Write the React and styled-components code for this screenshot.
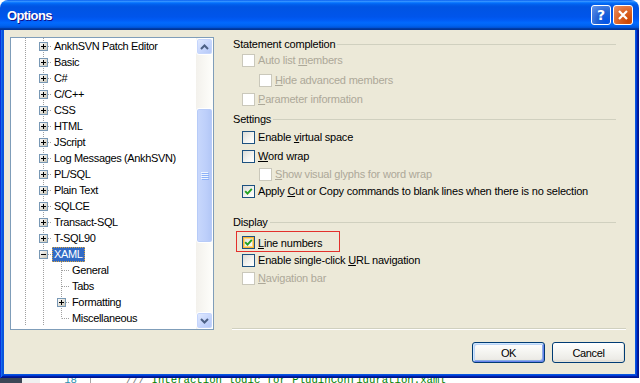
import React from 'react';
import styled, { createGlobalStyle } from 'styled-components';

const GlobalStyle = createGlobalStyle`
  html, body {
    margin: 0;
    padding: 0;
    background: #ffffff;
  }
  body {
    font-family: "Liberation Sans", Arial, sans-serif;
    font-size: 11px;
    letter-spacing: -0.35px;
  }
`;

const treeItems = [
  { label: 'AnkhSVN Patch Editor' },
  { label: 'Basic' },
  { label: 'C#' },
  { label: 'C/C++' },
  { label: 'CSS' },
  { label: 'HTML' },
  { label: 'JScript' },
  { label: 'Log Messages (AnkhSVN)' },
  { label: 'PL/SQL' },
  { label: 'Plain Text' },
  { label: 'SQLCE' },
  { label: 'Transact-SQL' },
  { label: 'T-SQL90' },
  { label: 'XAML', expanded: true, selected: true },
  { label: 'General', child: true },
  { label: 'Tabs', child: true },
  { label: 'Formatting', child: true, collapsed: true },
  { label: 'Miscellaneous', child: true, last: true },
];

const Screen = styled.div`
  width: 640px;
  height: 383px;
  overflow: hidden;
  display: flex;
  flex-direction: column;
`;

const Window = styled.div`
  width: 639px;
  height: 378px;
  display: flex;
  flex-direction: column;
  border-radius: 8px 8px 0 0;
  overflow: hidden;
  flex: none;
`;

const TitleBar = styled.div`
  height: 30px;
  flex: none;
  display: flex;
  align-items: center;
  gap: 2px;
  padding: 0 6px 0 7px;
  background: linear-gradient(
    180deg,
    #0058ee 0%,
    #3a93ff 4%,
    #288eff 6%,
    #127dff 8%,
    #036ffc 10%,
    #0262ee 14%,
    #0057e5 20%,
    #0054e3 24%,
    #0055eb 56%,
    #005bf5 66%,
    #026afe 76%,
    #0062ef 86%,
    #0052d6 92%,
    #0040ab 94%,
    #003092 100%
  );
`;

const Title = styled.div`
  flex: 1;
  color: #ffffff;
  font-size: 13px;
  font-weight: bold;
  letter-spacing: -0.6px;
  text-shadow: 1px 1px #0f1089;
`;

const CaptionButton = styled.div`
  width: 20px;
  height: 20px;
  box-sizing: border-box;
  border: 1px solid #ffffff;
  border-radius: 3px;
  display: flex;
  align-items: center;
  justify-content: center;
  color: #ffffff;
  font-family: "DejaVu Sans", sans-serif;
  font-weight: bold;
  font-size: 14px;
  letter-spacing: 0;
  background: ${({ $danger }) =>
    $danger
      ? 'radial-gradient(circle at 80% 85%, #cc4600 0%, #dc6527 50%, #e8916a 100%)'
      : 'radial-gradient(circle at 80% 85%, #0054e9 0%, #2263d5 45%, #6696eb 100%)'};
`;

const Frame = styled.div`
  flex: 1;
  display: flex;
  padding: 0 4px 4px;
  background: #0855dd;
  box-shadow: inset 1px 0 #0831d9, inset -1px -1px #00138c, inset 2px 0 #166aee,
    inset -2px -2px #001ea0, inset 3px 0 #0855dd, inset -3px -3px #003bda;
`;

const Body = styled.div`
  flex: 1;
  display: flex;
  flex-direction: column;
  background: #ece9d8;
  padding: 7px 9px 0 6px;
`;

const Main = styled.div`
  height: 293px;
  display: flex;
`;

const Tree = styled.div`
  width: 204px;
  box-sizing: border-box;
  border: 1px solid #7f9db9;
  background: #ffffff;
  display: flex;
  overflow: hidden;
`;

const TreeList = styled.div`
  flex: 1;
  display: flex;
  flex-direction: column;
  overflow: hidden;
`;

const TreeRow = styled.div`
  height: 16px;
  flex: none;
  display: flex;
  align-items: center;
  padding-left: 5px;
  color: #000000;
`;

const TreeLabel = styled.span`
  height: 15px;
  line-height: 15px;
  padding: 0 2px;
  white-space: nowrap;
  box-sizing: border-box;
  color: ${({ $selected }) => ($selected ? '#ffffff' : '#000000')};
  background: ${({ $selected }) => ($selected ? '#316ac5' : 'transparent')};
  outline: ${({ $selected }) => ($selected ? '1px dotted #d9a441' : 'none')};
  outline-offset: -1px;
`;

const Scrollbar = styled.div`
  width: 17px;
  flex: none;
  display: flex;
  flex-direction: column;
  background: linear-gradient(90deg, #f3f1ec, #fefefb);
`;

const ScrollButton = styled.div`
  width: 17px;
  height: 17px;
  flex: none;
  box-sizing: border-box;
  border: 1px solid #ffffff;
  border-radius: 3px;
  background: linear-gradient(135deg, #e3ebfe 0%, #c4d4fc 60%, #b3c7f6 100%);
  box-shadow: inset 0 0 0 1px #c5d5fc;
  display: flex;
  align-items: center;
  justify-content: center;
`;

const Track = styled.div`
  flex: 1;
  display: flex;
  flex-direction: column;
`;

const Thumb = styled.div`
  margin-top: ${({ $top }) => $top}px;
  height: ${({ $size }) => $size}px;
  box-sizing: border-box;
  border: 1px solid #ffffff;
  border-radius: 3px;
  background: linear-gradient(90deg, #c9d8fc 0%, #bdcffa 60%, #b2c6f6 100%);
  box-shadow: inset 0 0 0 1px #b7cbf8;
  display: flex;
  align-items: center;
  justify-content: center;
`;

const Grip = styled.div`
  width: 7px;
  display: flex;
  flex-direction: column;
  gap: 1px;

  span {
    height: 1px;
    background: #eef4fe;
    box-shadow: 1px 1px #8cb0f8;
  }
`;

const Pane = styled.div`
  flex: 1;
  margin-left: 18px;
  display: flex;
  flex-direction: column;
  align-items: flex-start;
  letter-spacing: -0.2px;
`;

const GroupHeader = styled.div`
  align-self: stretch;
  height: 14px;
  margin-top: ${({ $mt }) => $mt || 0}px;
  margin-right: 10px;
  padding-left: 1px;
  display: flex;
  align-items: center;
  color: #000000;
  white-space: nowrap;

  &::after {
    content: '';
    flex: 1;
    height: 1px;
    margin-left: 2px;
    background: #d0d0bf;
  }
`;

const CheckRow = styled.div`
  height: 18px;
  display: flex;
  align-items: center;
  gap: 3px;
  margin-top: ${({ $mt }) => $mt || 0}px;
  margin-left: ${({ $indent }) => ($indent ? 27 : 10)}px;
  color: ${({ $disabled }) => ($disabled ? '#aca899' : '#000000')};
  white-space: nowrap;

  u {
    text-decoration: underline;
    text-underline-offset: 1px;
  }
`;

const Highlight = styled.div`
  margin-top: ${({ $mt }) => $mt - 3}px;
  margin-left: 4px;
  margin-bottom: -1px;
  padding: 2px 17px 0 5px;
  border: 1px solid #e3302b;
  display: flex;

  ${CheckRow} {
    margin: 0;
    height: 17px;
  }
`;

const Box = styled.span`
  width: 13px;
  height: 13px;
  flex: none;
  box-sizing: border-box;
  border: 1px solid ${({ $disabled }) => ($disabled ? '#cac8bb' : '#1c5180')};
  background: ${({ $disabled }) =>
    $disabled ? '#ffffff' : 'linear-gradient(135deg, #dcdcd7 0%, #f5f5f2 60%, #ffffff 100%)'};
  box-shadow: ${({ $hot }) => ($hot ? 'inset 0 0 0 1px #f8b636, inset 0 0 0 2px #fdd889' : 'none')};
  display: flex;
  align-items: center;
  justify-content: center;
`;

const Separator = styled.div`
  align-self: stretch;
  margin-top: auto;
  border-top: 1px solid #d0d0bf;
  border-bottom: 1px solid #ffffff;
  height: 0;
`;

const Footer = styled.div`
  display: flex;
  justify-content: flex-end;
  gap: 7px;
  margin-top: 12px;
  padding-right: 1px;
`;

const DialogButton = styled.div`
  width: 73px;
  height: 21px;
  box-sizing: border-box;
  border: 1px solid #003c74;
  border-radius: 3px;
  display: flex;
  align-items: center;
  justify-content: center;
  color: #000000;
  background: linear-gradient(180deg, #ffffff 0%, #f4f4f0 50%, #ecebe6 86%, #d6d0c5 100%);
  box-shadow: ${({ $default }) =>
    $default
      ? 'inset 1px 1px #cee7ff, inset -1px -1px #6982ee, inset 2px 2px #bcd4f6, inset -2px -2px #89ade4'
      : 'inset -1px -1px #e3e3db'};
`;

const CodeStrip = styled.div`
  height: 5px;
  flex: none;
  display: flex;
  overflow: hidden;
  background: #ffffff;
  font-family: "Liberation Mono", "Courier New", monospace;
  font-size: 10.67px;
  line-height: 14px;
  letter-spacing: 0;
`;

const Gutter = styled.div`
  width: ${({ $w }) => $w}px;
  flex: none;
  background: ${({ $bg }) => $bg};
`;

const LineNo = styled.div`
  width: 37px;
  flex: none;
  margin-top: -5px;
  text-align: right;
  color: #2b91af;
`;

const Tick = styled.div`
  width: 1px;
  flex: none;
  margin-left: 13px;
  background: #a5a5a5;
`;

const Code = styled.div`
  margin-top: -5px;
  margin-left: 35px;
  white-space: pre;
  color: #008000;

  span {
    color: #808080;
  }
`;

const Connector = ({ kind, box }) => (
  <svg width="18" height="16" viewBox="0 0 18 16" style={{ flex: 'none' }}>
    <defs>
      <linearGradient id="exp" x1="0" y1="0" x2="1" y2="1">
        <stop offset="0" stopColor="#ffffff" />
        <stop offset="1" stopColor="#c6c2b2" />
      </linearGradient>
    </defs>
    {kind !== 'blank' && (
      <line
        x1="9.5"
        y1="0"
        x2="9.5"
        y2={kind === 'elbow' ? 8.5 : 16}
        stroke="#a0a0a0"
        strokeDasharray="1 1"
      />
    )}
    {(kind === 'tee' || kind === 'elbow') && (
      <line x1="10" y1="8.5" x2="18" y2="8.5" stroke="#a0a0a0" strokeDasharray="1 1" />
    )}
    {box && (
      <g>
        <rect x="5.5" y="4.5" width="8" height="8" fill="url(#exp)" stroke="#7898b5" />
        <line x1="7" y1="8.5" x2="12" y2="8.5" stroke="#000000" />
        {box === 'plus' && <line x1="9.5" y1="6" x2="9.5" y2="11" stroke="#000000" />}
      </g>
    )}
  </svg>
);

const TreeItem = ({ item }) => {
  const box = item.expanded ? 'minus' : item.child ? (item.collapsed ? 'plus' : null) : 'plus';
  return (
    <TreeRow>
      <Connector kind="pipe" />
      {item.child ? (
        <>
          <Connector kind="pipe" />
          <Connector kind={item.last ? 'elbow' : 'tee'} box={box} />
        </>
      ) : (
        <Connector kind="tee" box={box} />
      )}
      <TreeLabel $selected={item.selected}>{item.label}</TreeLabel>
    </TreeRow>
  );
};

const Chevron = ({ down }) => (
  <svg width="9" height="6" viewBox="0 0 9 6">
    <path
      d={down ? 'M1 1 L4.5 4.5 L8 1' : 'M1 5 L4.5 1.5 L8 5'}
      fill="none"
      stroke="#4d6185"
      strokeWidth="2"
    />
  </svg>
);

const CheckMark = () => (
  <svg width="9" height="9" viewBox="0 0 9 9">
    <path d="M1.2 4.2 L3.5 6.6 L7.8 1.8" fill="none" stroke="#21a121" strokeWidth="1.9" />
  </svg>
);

const Check = ({ checked, disabled, hot, indent, mt, children }) => (
  <CheckRow $disabled={disabled} $indent={indent} $mt={mt}>
    <Box $disabled={disabled} $hot={hot}>
      {checked && <CheckMark />}
    </Box>
    <span>{children}</span>
  </CheckRow>
);

export default function App() {
  return (
    <Screen>
      <GlobalStyle />
      <Window>
        <TitleBar>
          <Title>Options</Title>
          <CaptionButton>?</CaptionButton>
          <CaptionButton $danger>
            <svg width="12" height="12" viewBox="0 0 12 12">
              <path d="M2 2 L10 10 M10 2 L2 10" stroke="#ffffff" strokeWidth="2.2" />
            </svg>
          </CaptionButton>
        </TitleBar>
        <Frame>
          <Body>
            <Main>
              <Tree>
                <TreeList>
                  {treeItems.map(item => (
                    <TreeItem item={item} key={item.label} />
                  ))}
                </TreeList>
                <Scrollbar>
                  <ScrollButton>
                    <Chevron />
                  </ScrollButton>
                  <Track>
                    <Thumb $top={53} $size={135}>
                      <Grip>
                        <span />
                        <span />
                        <span />
                        <span />
                      </Grip>
                    </Thumb>
                  </Track>
                  <ScrollButton>
                    <Chevron down />
                  </ScrollButton>
                </Scrollbar>
              </Tree>
              <Pane>
                <GroupHeader>Statement completion</GroupHeader>
                <Check disabled>
                  Auto list <u>m</u>embers
                </Check>
                <Check disabled indent mt={2}>
                  <u>H</u>ide advanced members
                </Check>
                <Check disabled mt={1}>
                  <u>P</u>arameter information
                </Check>
                <GroupHeader $mt={4}>Settings</GroupHeader>
                <Check mt={2}>
                  Enable <u>v</u>irtual space
                </Check>
                <Check mt={1}>
                  <u>W</u>ord wrap
                </Check>
                <Check disabled indent>
                  <u>S</u>how visual glyphs for word wrap
                </Check>
                <Check checked mt={-1}>
                  Apply <u>C</u>ut or Copy commands to blank lines when there is no selection
                </Check>
                <GroupHeader $mt={15}>Display</GroupHeader>
                <Highlight $mt={5}>
                  <Check checked hot>
                    <u>L</u>ine numbers
                  </Check>
                </Highlight>
                <Check>
                  Enable single-click <u>U</u>RL navigation
                </Check>
                <Check disabled>
                  <u>N</u>avigation bar
                </Check>
                <Separator />
              </Pane>
            </Main>
            <Footer>
              <DialogButton $default>OK</DialogButton>
              <DialogButton>Cancel</DialogButton>
            </Footer>
          </Body>
        </Frame>
      </Window>
      <CodeStrip>
        <Gutter $w={22} $bg="#3c4656" />
        <Gutter $w={18} $bg="#f0f0f0" />
        <LineNo>18</LineNo>
        <Tick />
        <Code>
          <span>///</span> Interaction logic for PluginConfiguration.xaml
        </Code>
      </CodeStrip>
    </Screen>
  );
}
